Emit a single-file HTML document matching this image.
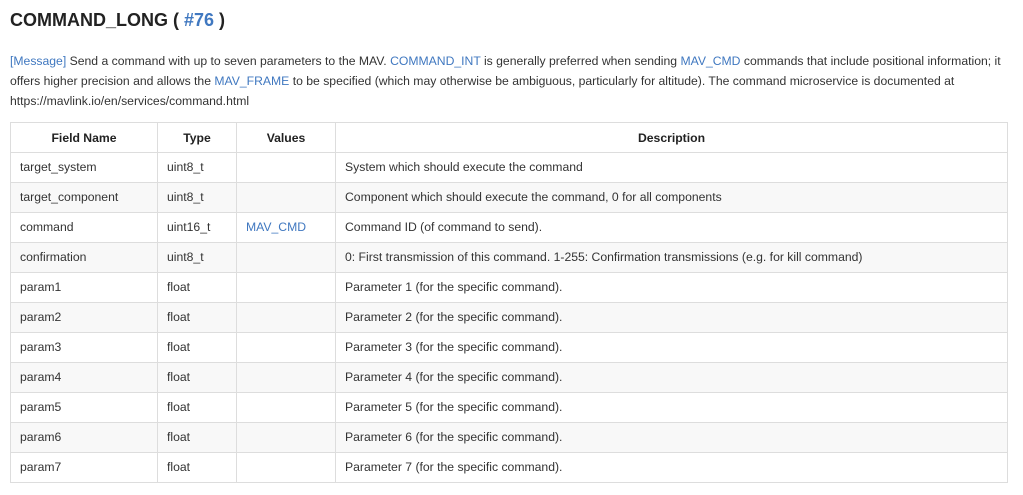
<!DOCTYPE html>
<html><head><meta charset="utf-8"><style>
body{margin:0;background:#fff;font-family:"Liberation Sans",Arial,sans-serif;color:#333;}
h3{position:absolute;left:10px;top:10px;margin:0;font-size:18px;font-weight:bold;color:#222;}
a{color:#4078c0;text-decoration:none;}
p{position:absolute;left:10px;top:51px;width:1005px;margin:0;font-size:12.2px;line-height:20px;}
table{position:absolute;left:10px;top:122px;width:998px;border-collapse:collapse;font-size:12.2px;}
td,th{border:1px solid #ddd;height:29px;padding:0 9px;text-align:left;}
td{padding-bottom:1px;height:28px;}
th{text-align:center;font-weight:bold;color:#222;}
tr:nth-child(odd) td{background:#f8f8f8;}
</style></head><body>
<h3>COMMAND_LONG ( <a>#76</a> )</h3>
<p><a>[Message]</a> Send a command with up to seven parameters to the MAV. <a>COMMAND_INT</a> is generally preferred when sending <a>MAV_CMD</a> commands that include positional information; it offers higher precision and allows the <a>MAV_FRAME</a> to be specified (which may otherwise be ambiguous, particularly for altitude). The command microservice is documented at https://mavlink.io/en/services/command.html</p>
<table>
<tr><th style="width:128px">Field Name</th><th style="width:60px">Type</th><th style="width:80px">Values</th><th>Description</th></tr>
<tr><td>target_system</td><td>uint8_t</td><td></td><td>System which should execute the command</td></tr>
<tr><td>target_component</td><td>uint8_t</td><td></td><td>Component which should execute the command, 0 for all components</td></tr>
<tr><td>command</td><td>uint16_t</td><td><a>MAV_CMD</a></td><td>Command ID (of command to send).</td></tr>
<tr><td>confirmation</td><td>uint8_t</td><td></td><td>0: First transmission of this command. 1-255: Confirmation transmissions (e.g. for kill command)</td></tr>
<tr><td>param1</td><td>float</td><td></td><td>Parameter 1 (for the specific command).</td></tr>
<tr><td>param2</td><td>float</td><td></td><td>Parameter 2 (for the specific command).</td></tr>
<tr><td>param3</td><td>float</td><td></td><td>Parameter 3 (for the specific command).</td></tr>
<tr><td>param4</td><td>float</td><td></td><td>Parameter 4 (for the specific command).</td></tr>
<tr><td>param5</td><td>float</td><td></td><td>Parameter 5 (for the specific command).</td></tr>
<tr><td>param6</td><td>float</td><td></td><td>Parameter 6 (for the specific command).</td></tr>
<tr><td>param7</td><td>float</td><td></td><td>Parameter 7 (for the specific command).</td></tr>
</table>
</body></html>
